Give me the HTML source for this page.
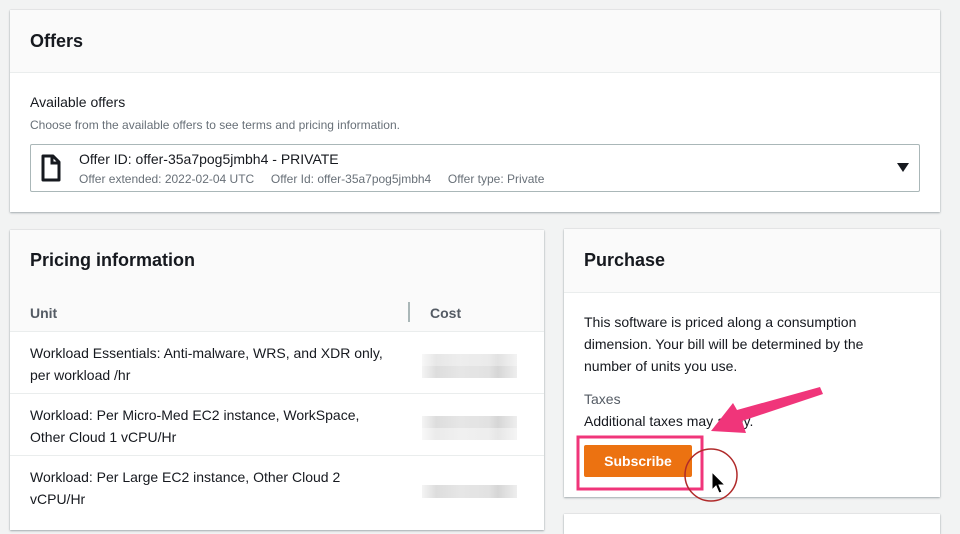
<!DOCTYPE html>
<html><head><style>
*{box-sizing:border-box;margin:0;padding:0}
body{width:960px;height:519px;overflow:hidden;background:#f2f3f3;font-family:"Liberation Sans",sans-serif;color:#16191f;position:relative}
.card{position:absolute;background:#fff;box-shadow:0 1px 2px rgba(0,28,36,.3),0 0 1px rgba(0,28,36,.2)}
.hd{background:#fafafa;border-bottom:1px solid #eaeded;font-weight:bold;font-size:18px;padding-left:20px}
.abs{position:absolute}
.blur{position:absolute;background:linear-gradient(90deg,#f4f4f4 0,#ddd 15%,#e6e6e6 40%,#e2e2e2 70%,#d6d6d6 80%,#eee 100%)}
</style></head><body>
<div class="card" style="left:10px;top:10px;width:930px;height:202px">
  <div class="hd" style="height:63px;line-height:62px">Offers</div>
  <div class="abs" style="left:20px;top:84px;font-size:14px">Available offers</div>
  <div class="abs" style="left:20px;top:108px;font-size:12px;color:#687078">Choose from the available offers to see terms and pricing information.</div>
  <div class="abs" style="left:20px;top:134px;width:890px;height:48px;border:1px solid #aab7b8;border-radius:2px">
    <svg class="abs" style="left:10px;top:9px" width="20" height="28" viewBox="0 0 20 28"><path d="M2 2h10l6 6v18H2z" fill="none" stroke="#16191f" stroke-width="3" stroke-linejoin="round"/><path d="M11 2v7h7" fill="none" stroke="#16191f" stroke-width="3"/></svg>
    <div class="abs" style="left:48px;top:6px;font-size:14px">Offer ID: offer-35a7pog5jmbh4 - PRIVATE</div>
    <div class="abs" style="left:48px;top:27px;font-size:12px;color:#687078;white-space:pre">Offer extended: 2022-02-04 UTC     Offer Id: offer-35a7pog5jmbh4     Offer type: Private</div>
    <div class="abs" style="right:10px;top:18px;width:0;height:0;border-left:6px solid transparent;border-right:6px solid transparent;border-top:9px solid #16191f"></div>
  </div>
</div>
<div class="card" style="left:10px;top:230px;width:534px;height:300px">
  <div class="hd" style="height:62px;line-height:60px;border-bottom:none">Pricing information</div>
  <div style="height:40px;background:#fafafa;border-bottom:1px solid #eaeded;position:relative;font-size:14px;font-weight:bold;color:#545b64">
    <span class="abs" style="left:20px;top:13px">Unit</span>
    <span class="abs" style="left:398px;top:10px;width:2px;height:20px;background:#aab7b8"></span>
    <span class="abs" style="left:420px;top:13px">Cost</span>
  </div>
  <div style="height:62px;border-bottom:1px solid #eaeded;position:relative;font-size:14px;line-height:22px">
    <div class="abs" style="left:20px;top:10px">Workload Essentials: Anti-malware, WRS, and XDR only,<br>per workload /hr</div>
    <div class="blur" style="left:412px;top:22px;width:95px;height:12px;opacity:.7"></div>
    <div class="blur" style="left:412px;top:34px;width:95px;height:12px"></div>
  </div>
  <div style="height:62px;border-bottom:1px solid #eaeded;position:relative;font-size:14px;line-height:22px">
    <div class="abs" style="left:20px;top:10px">Workload: Per Micro-Med EC2 instance, WorkSpace,<br>Other Cloud 1 vCPU/Hr</div>
    <div class="blur" style="left:412px;top:22px;width:95px;height:12px"></div>
    <div class="blur" style="left:412px;top:34px;width:95px;height:12px;opacity:.6"></div>
  </div>
  <div style="height:62px;position:relative;font-size:14px;line-height:22px">
    <div class="abs" style="left:20px;top:10px">Workload: Per Large EC2 instance, Other Cloud 2<br>vCPU/Hr</div>
    <div class="blur" style="left:412px;top:29px;width:95px;height:13px"></div>
  </div>
</div>
<div class="card" style="left:564px;top:229px;width:376px;height:268px">
  <div class="hd" style="height:64px;line-height:62px">Purchase</div>
  <div class="abs" style="left:20px;top:82px;font-size:14px;line-height:22px">This software is priced along a consumption<br>dimension. Your bill will be determined by the<br>number of units you use.</div>
  <div class="abs" style="left:20px;top:162px;font-size:14px;color:#545b64">Taxes</div>
  <div class="abs" style="left:20px;top:184px;font-size:14px">Additional taxes may apply.</div>
  <div class="abs" style="left:20px;top:216px;width:108px;height:32px;background:#ec7211;border-radius:2px;color:#fff;font-weight:bold;font-size:14px;text-align:center;line-height:32px">Subscribe</div>
</div>
<div class="card" style="left:564px;top:514px;width:376px;height:20px"></div>
<svg class="abs" style="left:0;top:0" width="960" height="519">
  <rect x="578" y="437" width="124" height="52" fill="none" stroke="#f0357a" stroke-width="3"/>
  <circle cx="711" cy="475" r="26" fill="none" stroke="#b02a2a" stroke-width="1.5"/>
  <path d="M711 431 L733 403 L737 410 L820 387 L823 394 L742 421 L746 433 Z" fill="#f0357a"/>
  <path d="M712 472v18l4-4 3 7 3-1-3-7h6z" fill="#000" stroke="#fff" stroke-width="1"/>
</svg>
</body></html>
